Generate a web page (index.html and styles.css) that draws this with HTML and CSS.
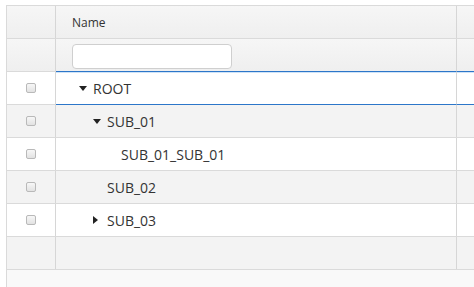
FILE: index.html
```html
<!DOCTYPE html>
<html lang="en">
<head>
    <meta charset="UTF-8">
    <title>Tree Grid</title>
    <link rel="stylesheet" href="styles.css">
</head>
<body>
    <div class="grid">
        <!-- Header -->
        <div class="row head">
            <div class="cell sel"></div>
            <div class="cell main name">Name</div>
            <div class="cell fill"></div>
        </div>

        <!-- Filter -->
        <div class="row filter">
            <div class="cell sel"></div>
            <div class="cell main name"><input type="text" class="filter-input"></div>
            <div class="cell fill"></div>
        </div>

        <div class="row selected">
            <div class="cell sel"><span class="check"></span></div>
            <div class="cell main tree">
                <span class="toggle"><svg width="8" height="5" viewBox="0 0 8 5"><path d="M0 0h8L4 5z" fill="#222"/></svg></span>
                <span class="label">ROOT</span>
            </div>
            <div class="cell fill"></div>
        </div>

        <div class="row odd">
            <div class="cell sel"><span class="check"></span></div>
            <div class="cell main tree">
                <span class="indent"></span>
                <span class="toggle"><svg width="8" height="5" viewBox="0 0 8 5"><path d="M0 0h8L4 5z" fill="#222"/></svg></span>
                <span class="label">SUB_01</span>
            </div>
            <div class="cell fill"></div>
        </div>

        <div class="row">
            <div class="cell sel"><span class="check"></span></div>
            <div class="cell main tree">
                <span class="indent"></span><span class="indent"></span>
                <span class="toggle"></span>
                <span class="label">SUB_01_SUB_01</span>
            </div>
            <div class="cell fill"></div>
        </div>

        <div class="row odd">
            <div class="cell sel"><span class="check"></span></div>
            <div class="cell main tree">
                <span class="indent"></span>
                <span class="toggle"></span>
                <span class="label">SUB_02</span>
            </div>
            <div class="cell fill"></div>
        </div>

        <div class="row">
            <div class="cell sel"><span class="check"></span></div>
            <div class="cell main tree">
                <span class="indent"></span>
                <span class="toggle"><svg width="5" height="8" viewBox="0 0 5 8"><path d="M0 0v8l5-4z" fill="#222"/></svg></span>
                <span class="label">SUB_03</span>
            </div>
            <div class="cell fill"></div>
        </div>

        <div class="row odd">
            <div class="cell sel"></div>
            <div class="cell main"></div>
            <div class="cell fill"></div>
        </div>

        <div class="grid-bottom"></div>
    </div>
</body>
</html>
```

FILE: styles.css
```css
* {
    margin: 0;
    padding: 0;
    box-sizing: border-box;
    font-family: 'Open Sans', sans-serif;
}

html, body {
    height: 100%;
    overflow: hidden;
}

body {
    background-color: #fff;
    color: #333;
    padding: 5px 0 0 6px;
}

.grid {
    height: 100%;
    border-left: 1px solid #dadada;
    border-top: 1px solid #dadada;
    display: flex;
    flex-direction: column;
}

.row {
    display: flex;
    height: 33px;
    flex-shrink: 0;
    border-bottom: 1px solid #dadada;
    background-color: #fff;
}

.row.odd {
    background-color: #f3f3f3;
}

.head, .filter {
    background: linear-gradient(#f6f6f6, #efefef);
}

.cell {
    display: flex;
    align-items: center;
}

.cell.sel {
    width: 49px;
    justify-content: center;
    border-right: 1px solid #d6d6d6;
}

.cell.main {
    width: 401px;
    border-right: 1px solid #d6d6d6;
}

.cell.fill {
    flex: 1;
}

.name {
    padding-left: 16px;
    font-size: 12px;
    color: #333;
}

.filter-input {
    width: 160px;
    height: 25px;
    margin-top: 2px;
    border: 1px solid #cfcfcf;
    border-radius: 4px;
    background: #fff;
    outline: none;
}

/* selected row: blue frame over the data cells */
.row.selected {
    margin-top: -1px;
    height: 34px;
    border-bottom: none;
}

.row.selected .sel {
    border-top: 1px solid #dadada;
    border-bottom: 1px solid #dadada;
}

.row.selected .main,
.row.selected .fill {
    border-top: 1px solid #2c76c9;
    border-bottom: 1px solid #2c76c9;
    box-shadow: inset 0 1px 0 #cfe3f7;
}

.row.selected .main {
    border-right-color: #d6d6d6;
}

.check {
    width: 10px;
    height: 10px;
    border: 1px solid #b9b9b9;
    border-radius: 2px;
    background: linear-gradient(#f7f7f7, #e2e2e2);
}

.tree {
    padding-left: 22px;
    font-size: 14px;
    color: #333;
}

.indent {
    display: inline-block;
    width: 14px;
    height: 1px;
}

.toggle {
    display: inline-flex;
    align-items: center;
    width: 15px;
    height: 10px;
    padding-left: 1px;
}

.label {
    line-height: 1;
    margin-top: 2px;
}

.grid-bottom {
    flex: 1;
    background-color: #f9f9f9;
}
```
